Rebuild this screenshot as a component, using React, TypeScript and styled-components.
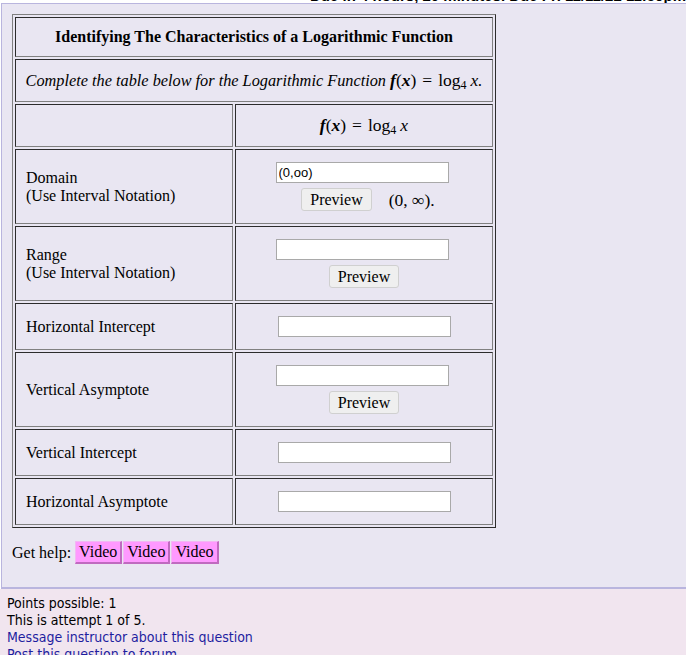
import { FC } from "react";
import styled, { createGlobalStyle } from "styled-components";

const GlobalStyle = createGlobalStyle`
  html, body {
    margin: 0;
    padding: 0;
    background: #ffffff;
    font-family: "Liberation Serif", "Times New Roman", serif;
    font-size: 16px;
    color: #000;
    overflow: hidden;
  }
`;

const Page = styled.div`
  width: 686px;
  height: 655px;
  overflow: hidden;
`;

const DueBar = styled.div`
  height: 3px;
  overflow: hidden;
  display: flex;
  align-items: flex-end;
  justify-content: flex-end;
  padding-left: 425px;
  font-family: "Liberation Sans", Arial, sans-serif;
  font-weight: bold;
  font-size: 15px;
  line-height: 15px;
  white-space: nowrap;
`;

const QuestionBox = styled.div`
  margin-left: 1px;
  border-top: 1px solid #b9b5de;
  border-left: 1px solid #b9b5de;
  border-bottom: 2px solid #b9b5de;
  background: #e9e6f2;
  padding: 10px 10px 23px 10px;
`;

const Table = styled.table`
  border: 1px outset grey;
  border-collapse: separate;
  border-spacing: 2px;
  width: 484px;
  table-layout: fixed;
`;

interface CellProps {
  $align?: "left" | "center";
  $pad?: number;
}

const Cell = styled.td<CellProps>`
  border: 1px inset grey;
  padding: ${({ $pad }) => $pad ?? 11}px 10px;
  text-align: ${({ $align }) => $align ?? "left"};
  vertical-align: middle;
  line-height: 18px;
`;

const LabelCell = styled(Cell)``;

const Title = styled.span`
  font-weight: bold;
`;

const InstructionCell = styled(Cell)`
  padding-left: 2px;
  padding-right: 2px;
  white-space: nowrap;
`;

const Instruction = styled.span`
  font-style: italic;
  font-size: 16.3px;
`;

const MathExpr = styled.span`
  font-style: normal;
  font-size: 17.5px;
  white-space: nowrap;
`;

const MathVar = styled.i<{ $bold?: boolean }>`
  font-family: "Liberation Serif", "Times New Roman", serif;
  font-style: italic;
  font-weight: ${({ $bold }) => ($bold ? "bold" : "normal")};
`;

const MathOp = styled.span`
  margin: 0 6px;
`;

const MathRm = styled.span``;

const Sub = styled.sub`
  font-size: 12px;
  vertical-align: -3px;
  line-height: 0;
  margin-right: 4px;
`;

const AnswerStack = styled.div`
  display: flex;
  flex-direction: column;
  align-items: center;
  gap: 5px;
`;

interface ShiftProps {
  $shift?: number;
}

const AnswerInput = styled.input<ShiftProps>`
  box-sizing: border-box;
  width: 173px;
  height: 21px;
  border: 1px solid #a9a9a9;
  background: #fff;
  padding: 1px 2px;
  font-family: "Liberation Sans", Arial, sans-serif;
  font-size: 13px;
  color: #000;
  margin-right: ${({ $shift }) => $shift ?? 0}px;
  outline: none;
`;

const PreviewRow = styled.div`
  display: flex;
  align-items: center;
  gap: 17px;
`;

const PreviewButton = styled.button<ShiftProps>`
  height: 23px;
  padding: 0 8px;
  background: #efefef;
  border: 1px solid #d0d0d0;
  border-radius: 3px;
  font-family: "Liberation Serif", "Times New Roman", serif;
  font-size: 16px;
  color: #000;
  margin-left: ${({ $shift }) => $shift ?? 0}px;
`;

const PreviewResult = styled.span`
  font-size: 17.5px;
`;

const HelpLine = styled.div`
  display: flex;
  align-items: center;
  margin-top: 13px;
  gap: 1px;
`;

const HelpLabel = styled.span`
  margin-right: 3px;
`;

const VideoButton = styled.button`
  height: 23px;
  padding: 0 3px;
  background: #ff99ff;
  border-style: solid;
  border-width: 1px 2px 2px 1px;
  border-color: #f3b8f3 #c06ac0 #c06ac0 #f3b8f3;
  font-family: "Liberation Serif", "Times New Roman", serif;
  font-size: 16px;
  color: #000;
`;

const InfoBox = styled.div`
  background: #f1e5ef;
  padding: 6px 7px 0 7px;
  font-family: "DejaVu Sans Condensed", "DejaVu Sans", sans-serif;
  font-size: 14px;
  line-height: 17px;
  height: 100px;
`;

const InfoLine = styled.div``;

const InfoLink = styled.a`
  display: block;
  color: #1e1e9f;
  text-decoration: none;
`;

const LogFx: FC<{ bold?: boolean }> = ({ bold }) => (
  <MathExpr>
    <MathVar $bold={bold}>f</MathVar>
    <MathRm>(</MathRm>
    <MathVar $bold={bold}>x</MathVar>
    <MathRm>)</MathRm>
    <MathOp>=</MathOp>
    <MathRm>log</MathRm>
    <Sub>4</Sub>
    <MathVar>x</MathVar>
  </MathExpr>
);

const rows = [
  { label: ["Domain", "(Use Interval Notation)"], value: "(0,oo)", preview: true, result: "(0, ∞)." },
  { label: ["Range", "(Use Interval Notation)"], value: "", preview: true },
  { label: ["Horizontal Intercept"], value: "" },
  { label: ["Vertical Asymptote"], value: "", preview: true },
  { label: ["Vertical Intercept"], value: "" },
  { label: ["Horizontal Asymptote"], value: "" },
];

const App: FC = () => {
  return (
    <Page>
      <GlobalStyle />
      <DueBar>Due in 4 hours, 20 minutes. Due Fri 11/11/22 11:59pm</DueBar>
      <QuestionBox>
        <Table>
          <colgroup>
            <col style={{ width: 218 }} />
            <col />
          </colgroup>
          <tbody>
            <tr>
              <Cell colSpan={2} $align="center" $pad={10}>
                <Title>Identifying The Characteristics of a Logarithmic Function</Title>
              </Cell>
            </tr>
            <tr>
              <InstructionCell colSpan={2} $align="center">
                <Instruction>
                  Complete the table below for the Logarithmic Function <LogFx bold />.
                </Instruction>
              </InstructionCell>
            </tr>
            <tr>
              <LabelCell />
              <Cell $align="center">
                <LogFx bold />
              </Cell>
            </tr>
            {rows.map((row, i) => (
              <tr key={i}>
                <LabelCell>
                  {row.label.map((l) => (
                    <div key={l}>{l}</div>
                  ))}
                </LabelCell>
                <Cell $align="center" $pad={12}>
                  <AnswerStack>
                    <AnswerInput
                      type="text"
                      defaultValue={row.value}
                      $shift={row.preview ? 4 : 0}
                    />
                    {row.preview && (
                      <PreviewRow>
                        <PreviewButton $shift={row.result ? 8 : 0}>Preview</PreviewButton>
                        {row.result && <PreviewResult>{row.result}</PreviewResult>}
                      </PreviewRow>
                    )}
                  </AnswerStack>
                </Cell>
              </tr>
            ))}
          </tbody>
        </Table>
        <HelpLine>
          <HelpLabel>Get help:</HelpLabel>
          <VideoButton>Video</VideoButton>
          <VideoButton>Video</VideoButton>
          <VideoButton>Video</VideoButton>
        </HelpLine>
      </QuestionBox>
      <InfoBox>
        <InfoLine>Points possible: 1</InfoLine>
        <InfoLine>This is attempt 1 of 5.</InfoLine>
        <InfoLink href="#">Message instructor about this question</InfoLink>
        <InfoLink href="#">Post this question to forum</InfoLink>
      </InfoBox>
    </Page>
  );
};

export default App;
